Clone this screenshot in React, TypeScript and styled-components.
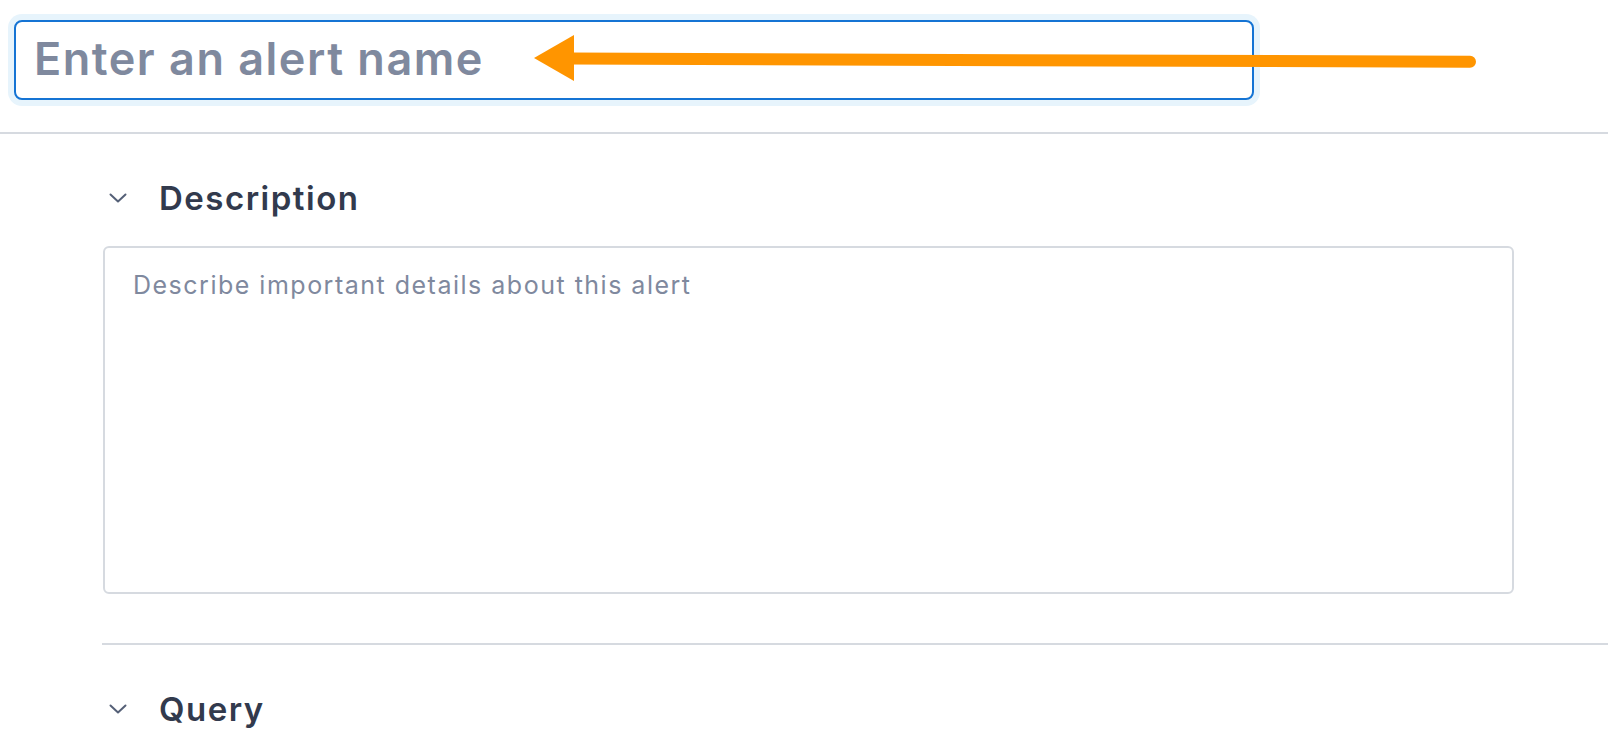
import styled, { createGlobalStyle } from "styled-components"

const GlobalStyle = createGlobalStyle`
    html, body {
        margin: 0;
        padding: 0;
        background: #ffffff;
        font-family: Inter, "Noto Sans", "Liberation Sans", sans-serif;
    }
`

const Page = styled.div`
    position: relative;
    width: 1608px;
    min-height: 740px;
    overflow: hidden;
`

const Header = styled.div`
    height: 134px;
    padding: 20px 0 0 14px;
    box-sizing: border-box;
    border-bottom: 2px solid #d6dae0;
`

const NameInput = styled.input`
    display: block;
    width: 1240px;
    height: 80px;
    box-sizing: border-box;
    padding: 0 18px 4px;
    border: 2px solid #1574d4;
    border-radius: 8px;
    box-shadow: 0 0 0 6px #e7f4fc;
    outline: none;
    font-family: Inter, "Noto Sans", sans-serif;
    font-size: 45px;
    font-weight: 600;
    letter-spacing: 1.5px;
    color: #323a4d;
    &::placeholder {
        color: #7f899e;
    }
`

const Section = styled.section<{ $last?: boolean }>`
    margin-left: 102px;
    padding: 44px 0 ${p => (p.$last ? "0" : "49px")} 1px;
    border-bottom: ${p => (p.$last ? "none" : "2px solid #d6dae0")};
`

const SectionHead = styled.div`
    display: flex;
    align-items: center;
    gap: 32px;
    height: 40px;
    padding-left: 6px;
`

const Chevron = styled.svg`
    flex: none;
    width: 18px;
    height: 10px;
`

const Title = styled.h2`
    margin: 0;
    font-size: 33px;
    line-height: 40px;
    font-weight: 600;
    letter-spacing: 1.5px;
    color: #323a4d;
`

const Description = styled.textarea`
    display: block;
    margin-top: 28px;
    width: 1411px;
    height: 348px;
    box-sizing: border-box;
    padding: 22px 28px;
    border: 2px solid #d6dae0;
    border-radius: 6px;
    resize: none;
    outline: none;
    font-family: Inter, "Noto Sans", sans-serif;
    font-size: 25px;
    letter-spacing: 1.5px;
    color: #323a4d;
    &::placeholder {
        color: #7f899e;
    }
`

const Annotation = styled.svg`
    position: absolute;
    top: 0;
    left: 0;
    pointer-events: none;
`

const ChevronIcon = () => (
    <Chevron viewBox="0 0 18 10">
        <path d="M1.5 1.5 L9 8.5 L16.5 1.5" fill="none" stroke="#556077" strokeWidth="2" strokeLinecap="round" strokeLinejoin="round" />
    </Chevron>
)

const App = () => {
    return <Page>
        <GlobalStyle />
        <Header>
            <NameInput placeholder="Enter an alert name" />
        </Header>
        <Section>
            <SectionHead>
                <ChevronIcon />
                <Title>Description</Title>
            </SectionHead>
            <Description placeholder="Describe important details about this alert" />
        </Section>
        <Section $last>
            <SectionHead>
                <ChevronIcon />
                <Title>Query</Title>
            </SectionHead>
        </Section>
        {/* orange pointer drawn over the name field */}
        <Annotation width="1608" height="120" viewBox="0 0 1608 120">
            <line x1="570" y1="58.6" x2="1470" y2="61.7" stroke="#ff9500" strokeWidth="12" strokeLinecap="round" />
            <polygon points="534,58 574,35 574,81" fill="#ff9500" />
        </Annotation>
    </Page>
}

export default App
